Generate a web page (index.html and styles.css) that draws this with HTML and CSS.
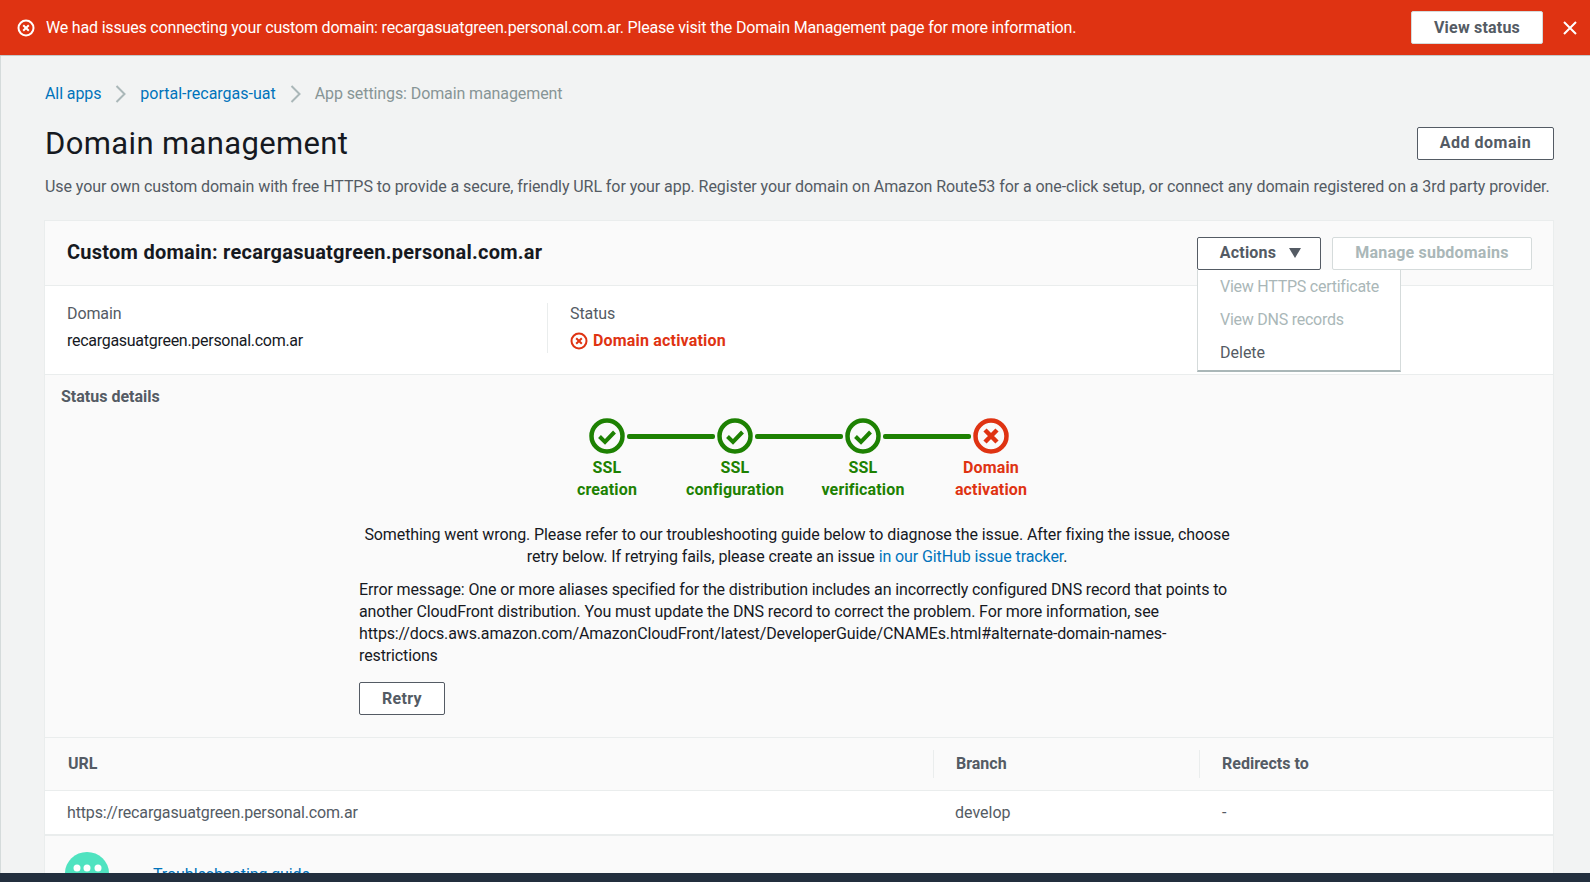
FILE: index.html
```html
<!DOCTYPE html>
<html lang="en">
<head>
<meta charset="utf-8">
<title>Domain management</title>
<link rel="stylesheet" href="styles.css">
</head>
<body>
<div class="banner">
  <svg class="banner-icon" viewBox="0 0 18 18"><circle cx="9" cy="9" r="7.5" fill="none" stroke="#fff" stroke-width="2"/><path d="M6.2 6.200l5.600 5.600M11.800 6.200l-5.600 5.600" stroke="#fff" stroke-width="2" fill="none"/></svg>
  <span class="banner-text">We had issues connecting your custom domain: recargasuatgreen.personal.com.ar. Please visit the Domain Management page for more information.</span>
  <button class="btn btn-status">View status</button>
  <svg class="banner-close" viewBox="0 0 16 16"><path d="M2 2l12 12M14 2L2 14" stroke="#fff" stroke-width="2" fill="none"/></svg>
</div>
<main class="main">
  <nav class="crumbs">
    <a class="link">All apps</a>
    <svg class="chev" viewBox="0 0 11 18"><path d="M1.500 1l8 8-8 8" fill="none" stroke="#aab7b8" stroke-width="2"/></svg>
    <a class="link crumb-app">portal-recargas-uat</a>
    <svg class="chev" viewBox="0 0 11 18"><path d="M1.500 1l8 8-8 8" fill="none" stroke="#aab7b8" stroke-width="2"/></svg>
    <span class="crumb-current">App settings: Domain management</span>
  </nav>
  <div class="title-row">
    <h1 class="title">Domain management</h1>
    <button class="btn btn-add">Add domain</button>
  </div>
  <p class="desc">Use your own custom domain with free HTTPS to provide a secure, friendly URL for your app. Register your domain on Amazon Route53 for a one-click setup, or connect any domain registered on a 3rd party provider.</p>
  <section class="card">
    <header class="card-head">
      <h2 class="card-title">Custom domain: recargasuatgreen.personal.com.ar</h2>
      <div class="actions">
        <button class="btn btn-actions">Actions <svg class="caret" viewBox="0 0 12 10"><path d="M0 0h12L6 10z" fill="#545b64"/></svg></button>
        <div class="menu">
          <div class="menu-item is-off">View HTTPS certificate</div>
          <div class="menu-item is-off">View DNS records</div>
          <div class="menu-item">Delete</div>
        </div>
      </div>
      <button class="btn btn-manage">Manage subdomains</button>
    </header>
    <div class="summary">
      <div class="col col-domain">
        <div class="label">Domain</div>
        <div class="value">recargasuatgreen.personal.com.ar</div>
      </div>
      <div class="col col-status">
        <div class="label">Status</div>
        <div class="value value-err">
          <svg class="err-icon" viewBox="0 0 18 18"><circle cx="9" cy="9" r="7.500" fill="none" stroke="#df3312" stroke-width="2"/><path d="M6.200 6.200l5.600 5.600M11.800 6.200l-5.600 5.600" stroke="#df3312" stroke-width="2" fill="none"/></svg>
          Domain activation
        </div>
      </div>
    </div>
    <div class="details">
      <h3 class="details-title">Status details</h3>
      <div class="track">
        <svg class="node" viewBox="0 0 36 36"><circle cx="18" cy="18" r="15.500" fill="#fafafa" stroke="#1d8102" stroke-width="4.500"/><path d="M10.500 18.500l5.500 5.500 9.500-10" fill="none" stroke="#1d8102" stroke-width="4"/></svg>
        <span class="bar"></span>
        <svg class="node" viewBox="0 0 36 36"><circle cx="18" cy="18" r="15.500" fill="#fafafa" stroke="#1d8102" stroke-width="4.500"/><path d="M10.500 18.500l5.500 5.500 9.500-10" fill="none" stroke="#1d8102" stroke-width="4"/></svg>
        <span class="bar"></span>
        <svg class="node" viewBox="0 0 36 36"><circle cx="18" cy="18" r="15.500" fill="#fafafa" stroke="#1d8102" stroke-width="4.500"/><path d="M10.500 18.500l5.500 5.500 9.500-10" fill="none" stroke="#1d8102" stroke-width="4"/></svg>
        <span class="bar"></span>
        <svg class="node" viewBox="0 0 36 36"><circle cx="18" cy="18" r="15.500" fill="#fafafa" stroke="#df3312" stroke-width="4.500"/><path d="M12 12l12 12M24 12L12 24" fill="none" stroke="#df3312" stroke-width="4.500"/></svg>
      </div>
      <div class="steps">
        <div class="step">SSL<br>creation</div>
        <div class="step">SSL<br>configuration</div>
        <div class="step">SSL<br>verification</div>
        <div class="step step-err">Domain<br>activation</div>
      </div>
      <div class="message">
        <p class="msg-center">Something went wrong. Please refer to our troubleshooting guide below to diagnose the issue. After fixing the issue, choose retry below. If retrying fails, please create an issue <a class="link">in our GitHub issue tracker</a>.</p>
        <p class="msg-error">Error message: One or more aliases specified for the distribution includes an incorrectly configured DNS record that points to another CloudFront distribution. You must update the DNS record to correct the problem. For more information, see https://docs.aws.amazon.com/AmazonCloudFront/latest/DeveloperGuide/CNAMEs.html#alternate-domain-names-restrictions</p>
        <button class="btn btn-retry">Retry</button>
      </div>
    </div>
    <div class="thead">
      <div class="th th-url">URL</div>
      <div class="th th-branch">Branch</div>
      <div class="th th-redirect">Redirects to</div>
    </div>
    <div class="trow">
      <div class="td td-url">https://recargasuatgreen.personal.com.ar</div>
      <div class="td td-branch">develop</div>
      <div class="td td-redirect">-</div>
    </div>
    <div class="guide">
      <svg class="blob" viewBox="0 0 44 44"><ellipse cx="22" cy="22" rx="22" ry="21" fill="#4fe3c0"/><circle cx="12" cy="17" r="3.500" fill="#fff"/><circle cx="22" cy="17" r="3.500" fill="#fff"/><circle cx="33" cy="17" r="3.500" fill="#fff"/></svg>
      <a class="link guide-link">Troubleshooting guide</a>
    </div>
  </section>
</main>
<div class="footer-bar"></div>
</body>
</html>
```
FILE: styles.css
```css
* { box-sizing: border-box; }
html, body { height: 100%; }
body {
  margin: 0;
  height: 882px;
  overflow: hidden;
  display: flex;
  flex-direction: column;
  background: #f2f3f3;
  color: #16191f;
  font-family: Roboto, "Noto Sans", sans-serif;
  font-size: 16px;
  line-height: 22px;
}
h1, h2, h3, p { margin: 0; }
.link { color: #0073bb; }

.btn {
  font-family: inherit;
  font-size: 16px;
  font-weight: 700;
  line-height: 22px;
  letter-spacing: 0.2px;
  background: #fff;
  color: #545b64;
  border: 1px solid #545b64;
  border-radius: 2px;
  padding: 4px 20px;
  height: 33px;
  white-space: nowrap;
}

.banner {
  flex: none;
  height: 56px;
  display: flex;
  align-items: center;
  background: #df3312;
  color: #fff;
  border-bottom: 1px solid #c4c8c8;
  padding-left: 17px;
}
.banner-icon { width: 18px; height: 18px; margin-right: 11px; flex: none; }
.banner-text { flex: 1; letter-spacing: -0.18px; }
.btn-status { width: 132px; border-color: #d5dbdb; margin-right: 19px; }
.banner-close { width: 16px; height: 16px; margin-right: 12px; flex: none; }

.main {
  flex: 1;
  min-height: 0;
  overflow: hidden;
  padding: 26px 36px 0 44px;
  border-left: 1px solid #d5dbdb;
}
.crumbs { display: flex; align-items: center; height: 24px; letter-spacing: -0.1px; }
.chev { width: 11px; height: 18px; margin: 0 14px 0 14px; }
.crumb-app { letter-spacing: 0; }
.crumb-current { color: #879596; }

.title-row {
  display: flex;
  justify-content: space-between;
  align-items: center;
  margin-top: 12px;
  height: 50px;
}
.title { font-size: 31px; line-height: 36px; font-weight: 400; letter-spacing: 0.36px; padding-top: 2px; }
.btn-add { width: 137px; letter-spacing: 0.5px; }
.desc { color: #545b64; margin-top: 8px; white-space: nowrap; letter-spacing: -0.07px; }

.card {
  margin: 22px 0 0 -1px;
  background: #fff;
  border: 1px solid #eaeded;
  border-bottom: 0;
}
.card-head {
  height: 65px;
  display: flex;
  align-items: center;
  background: #fafafa;
  border-bottom: 1px solid #eaeded;
  padding: 0 21px 0 22px;
}
.card-title { flex: 1; font-size: 20px; line-height: 24px; font-weight: 700; letter-spacing: 0.25px; padding-bottom: 2px; }
.actions { position: relative; margin-right: 11px; }
.btn-actions { width: 124px; display: flex; align-items: center; justify-content: center; gap: 13px; padding: 4px 0 4px 3px; color: #545b64; }
.caret { width: 12px; height: 10px; }
.btn-manage { width: 200px; color: #aab7b8; border-color: #d5dbdb; }
.menu {
  position: absolute;
  left: 0;
  top: 33px;
  width: 204px;
  height: 102px;
  background: #fff;
  border: 1px solid #d5dbdb;
  border-bottom: 2px solid #aab7b8;
  border-top: 0;
  z-index: 2;
}
.menu-item { height: 33px; line-height: 33px; padding-left: 22px; color: #545b64; }
.menu-item.is-off { color: #aab7b8; letter-spacing: -0.25px; }

.summary {
  display: flex;
  height: 89px;
  padding-top: 17px;
  border-bottom: 1px solid #eaeded;
}
.col { height: 50px; }
.col-domain { width: 502px; padding-left: 22px; }
.col-status { border-left: 1px solid #eaeded; padding-left: 22px; }
.label { color: #545b64; height: 27px; line-height: 22px; letter-spacing: -0.1px; }
.value { height: 22px; letter-spacing: -0.28px; }
.value-err { display: flex; align-items: center; color: #df3312; font-weight: 700; gap: 5px; letter-spacing: 0.18px; }
.err-icon { width: 18px; height: 18px; }

.details { background: #fafafa; border-bottom: 1px solid #eaeded; height: 363px; padding: 11px 16px 0; }
.details-title { font-size: 16px; line-height: 22px; font-weight: 700; color: #545b64; }
.track { display: flex; justify-content: center; align-items: center; gap: 2px; margin-top: 10px; height: 36px; }
.node { width: 36px; height: 36px; flex: none; }
.bar { width: 88px; height: 5px; border-radius: 2px; background: #1d8102; }
.steps { display: flex; justify-content: center; margin-top: 3px; }
.step { width: 128px; text-align: center; font-weight: 700; color: #1d8102; letter-spacing: 0.15px; }
.step-err { color: #df3312; }
.message { width: 880px; margin: 23px auto 0; }
.msg-center { text-align: center; letter-spacing: -0.1px; padding-right: 4px; }
.msg-error { margin-top: 11px; letter-spacing: -0.13px; }
.btn-retry { margin-top: 15px; width: 86px; padding: 4px 0; letter-spacing: 0.3px; }

.thead { height: 53px; display: flex; align-items: center; background: #fafafa; border-bottom: 1px solid #eaeded; }
.th { font-weight: 700; color: #545b64; height: 28px; line-height: 28px; padding-left: 22px; }
.th-url { width: 888px; padding-left: 23px; }
.th-branch { width: 266px; border-left: 1px solid #eaeded; }
.th-redirect { border-left: 1px solid #eaeded; }
.trow { height: 45px; display: flex; align-items: center; background: #fff; border-bottom: 2px solid #eaeded; }
.td { color: #545b64; }
.td-url { width: 888px; padding-left: 22px; letter-spacing: -0.15px; }
.td-branch { width: 267px; padding-left: 22px; }
.td-redirect { padding-left: 22px; }
.guide { display: flex; background: #fafafa; padding: 15px 0 0 20px; height: 60px; }
.blob { width: 44px; height: 44px; flex: none; }
.guide-link { margin-left: 44px; margin-top: 13px; letter-spacing: -0.1px; }

.footer-bar { flex: none; height: 9px; background: #232f3e; }
```
